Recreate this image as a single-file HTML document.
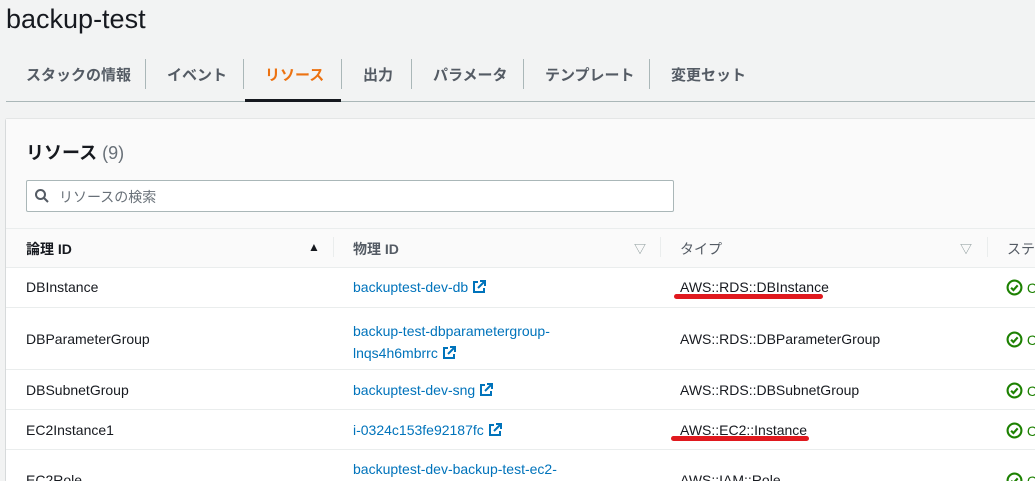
<!DOCTYPE html>
<html><head><meta charset="utf-8"><style>
*{margin:0;padding:0;box-sizing:border-box}
html,body{width:1035px;height:481px;overflow:hidden}
body{background:#f2f3f3;font-family:"Liberation Sans","Noto Sans CJK JP",sans-serif;color:#16191f;position:relative;font-size:14px}
.a{position:absolute;white-space:nowrap}
h1{position:absolute;left:6px;top:4px;font-size:27px;font-weight:400;color:#16191f}
.tab{position:absolute;top:64px;font-size:15px;font-weight:700;color:#545b64}
.sep{position:absolute;top:59px;width:1px;height:30px;background:#aab7b8}
.panel{position:absolute;left:6px;top:119px;width:1029px;height:362px;background:#fafafa;box-shadow:0 1px 1px rgba(0,28,36,.3),0 0 1px rgba(0,28,36,.3)}
.row{position:absolute;left:6px;width:1029px;background:#fff;border-top:1px solid #eaeded}
.lk{color:#0073bb}
.ck{position:absolute;left:1006px}
.ext{display:inline-block;vertical-align:-2px;margin-left:4px}
.clip{position:absolute;left:0;top:449px;width:1035px;height:32px;overflow:hidden}
</style></head><body>
<h1>backup-test</h1>
<div class="tab" style="left:26px">スタックの情報</div>
<div class="sep" style="left:145px"></div>
<div class="tab" style="left:167px">イベント</div>
<div class="sep" style="left:243px"></div>
<div class="tab" style="left:265px;color:#ec7211">リソース</div>
<div class="sep" style="left:341px"></div>
<div class="tab" style="left:363px">出力</div>
<div class="sep" style="left:411px"></div>
<div class="tab" style="left:433px">パラメータ</div>
<div class="sep" style="left:523px"></div>
<div class="tab" style="left:545px">テンプレート</div>
<div class="sep" style="left:649px"></div>
<div class="tab" style="left:671px">変更セット</div>
<div class="a" style="left:6px;top:101px;width:1029px;height:1px;background:#aab7b8"></div>
<div class="a" style="left:245px;top:99px;width:96px;height:3px;background:#16191f"></div>
<div class="panel"></div>
<div class="a" style="left:26px;top:139px;font-size:18px;font-weight:700">リソース <span style="font-weight:400;color:#687078">(9)</span></div>
<div class="a" style="left:26px;top:180px;width:648px;height:32px;border:1px solid #aab7b8;border-radius:2px;background:#fff"></div>
<svg class="a" style="left:34px;top:188px" width="16" height="16" viewBox="0 0 16 16"><circle cx="6.5" cy="6.5" r="4.5" fill="none" stroke="#545b64" stroke-width="2"/><path d="M10 10l4 4" stroke="#545b64" stroke-width="2"/></svg>
<div class="a" style="left:59px;top:187px;color:#687078">リソースの検索</div>
<div class="a" style="left:6px;top:228px;width:1029px;height:1px;background:#eaeded"></div>
<div class="a" style="left:26px;top:239px;font-weight:700">論理 ID</div>
<div class="a" style="left:308px;top:240px;font-size:12px">▲</div>
<div class="a" style="left:333px;top:237px;width:1px;height:20px;background:#eaeded"></div>
<div class="a" style="left:353px;top:239px;font-weight:700;color:#545b64">物理 ID</div>
<div class="a" style="left:634px;top:240px;font-size:12px;color:#879596">▽</div>
<div class="a" style="left:660px;top:237px;width:1px;height:20px;background:#eaeded"></div>
<div class="a" style="left:680px;top:239px;color:#545b64">タイプ</div>
<div class="a" style="left:960px;top:240px;font-size:12px;color:#879596">▽</div>
<div class="a" style="left:987px;top:237px;width:1px;height:20px;background:#eaeded"></div>
<div class="a" style="left:1007px;top:239px;color:#545b64">ステ</div>

<div class="row" style="top:267px;height:40px"></div>
<div class="row" style="top:307px;height:62px"></div>
<div class="row" style="top:369px;height:40px"></div>
<div class="row" style="top:409px;height:40px"></div>
<div class="row" style="top:449px;height:32px"></div>

<svg width="0" height="0" style="position:absolute"><defs>
<symbol id="e" viewBox="0 0 14 14"><path d="M6 2H2v10h10V8" fill="none" stroke="#0073bb" stroke-width="2"/><path d="M8 1h5v5M13 1L6 8" fill="none" stroke="#0073bb" stroke-width="2"/></symbol>
<symbol id="c" viewBox="0 0 16 16"><circle cx="8" cy="8" r="6.5" fill="none" stroke="#1d8102" stroke-width="2"/><path d="M4.8 8.2l2.2 2.2 4-4.4" fill="none" stroke="#1d8102" stroke-width="2"/></symbol>
</defs></svg>

<div class="a" style="left:26px;top:279px">DBInstance</div>
<div class="a lk" style="left:353px;top:279px">backuptest-dev-db<svg class="ext" width="14" height="14"><use href="#e"/></svg></div>
<div class="a" style="left:680px;top:279px">AWS::RDS::DBInstance</div>
<div class="a" style="left:674px;top:294px;width:149px;height:5px;border-radius:3px;background:#e0191e"></div>
<div class="a ck" style="top:279px"><svg width="17" height="17" style="vertical-align:-3px"><use href="#c"/></svg> <span style="color:#1d8102">C</span></div>

<div class="a" style="left:26px;top:331px">DBParameterGroup</div>
<div class="a lk" style="left:353px;top:320px;line-height:22px">backup-test-dbparametergroup-<br>lnqs4h6mbrrc<svg class="ext" width="14" height="14"><use href="#e"/></svg></div>
<div class="a" style="left:680px;top:331px">AWS::RDS::DBParameterGroup</div>
<div class="a ck" style="top:331px"><svg width="17" height="17" style="vertical-align:-3px"><use href="#c"/></svg> <span style="color:#1d8102">C</span></div>

<div class="a" style="left:26px;top:382px">DBSubnetGroup</div>
<div class="a lk" style="left:353px;top:382px">backuptest-dev-sng<svg class="ext" width="14" height="14"><use href="#e"/></svg></div>
<div class="a" style="left:680px;top:382px">AWS::RDS::DBSubnetGroup</div>
<div class="a ck" style="top:382px"><svg width="17" height="17" style="vertical-align:-3px"><use href="#c"/></svg> <span style="color:#1d8102">C</span></div>

<div class="a" style="left:26px;top:422px">EC2Instance1</div>
<div class="a lk" style="left:353px;top:422px">i-0324c153fe92187fc<svg class="ext" width="14" height="14"><use href="#e"/></svg></div>
<div class="a" style="left:680px;top:422px">AWS::EC2::Instance</div>
<div class="a" style="left:671px;top:436px;width:138px;height:5px;border-radius:3px;background:#e0191e"></div>
<div class="a ck" style="top:422px"><svg width="17" height="17" style="vertical-align:-3px"><use href="#c"/></svg> <span style="color:#1d8102">C</span></div>

<div class="clip">
<div class="a" style="left:26px;top:23px">EC2Role</div>
<div class="a lk" style="left:353px;top:12px">backuptest-dev-backup-test-ec2-</div>
<div class="a" style="left:680px;top:23px">AWS::IAM::Role</div>
<div class="a ck" style="top:23px"><svg width="17" height="17" style="vertical-align:-3px"><use href="#c"/></svg> <span style="color:#1d8102">C</span></div>
</div>
</body></html>
